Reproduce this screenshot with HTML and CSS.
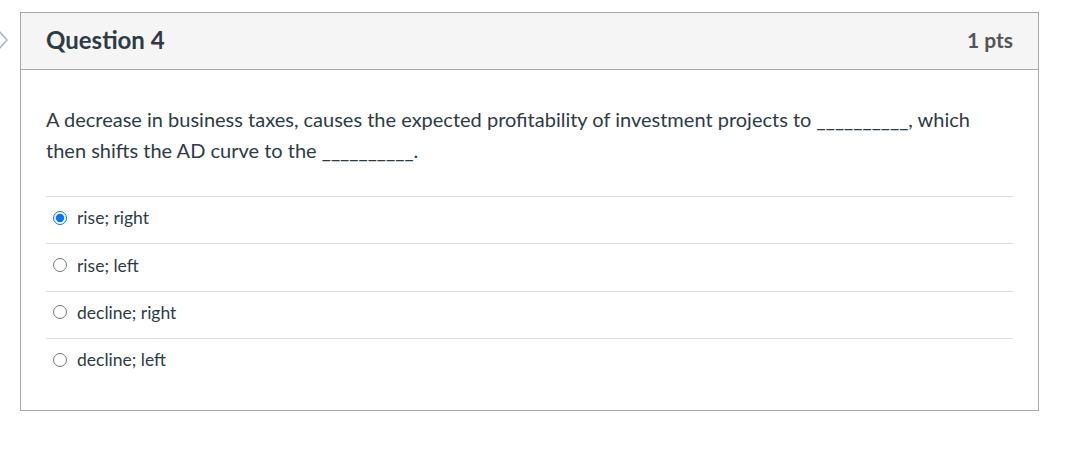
FILE: index.html
```html
<!DOCTYPE html>
<html>
<head>
<meta charset="utf-8">
<link rel="stylesheet" href="styles.css">
</head>
<body>
<div class="page">
  <svg class="chevron" width="12" height="24" viewBox="0 0 12 24"><path d="M-2 2 L7 12 L-2 22" fill="none" stroke="#a9b7c6" stroke-width="1.6"/></svg>
  <div class="card">
    <div class="header">
      <h3 class="title">Question 4</h3>
      <span class="pts">1 pts</span>
    </div>
    <div class="body">
      <p class="question">A decrease in business taxes, causes the expected profitability of investment projects to __________, which then shifts the AD curve to the __________.</p>
      <div class="answers">
        <label class="answer"><input type="radio" name="a" checked><span>rise; right</span></label>
        <label class="answer"><input type="radio" name="a"><span>rise; left</span></label>
        <label class="answer"><input type="radio" name="a"><span>decline; right</span></label>
        <label class="answer"><input type="radio" name="a"><span>decline; left</span></label>
      </div>
    </div>
  </div>
</div>
</body>
</html>
```

FILE: styles.css
```css
html, body {
  margin: 0;
  padding: 0;
  background: #fff;
}
body {
  font-family: Lato, "Liberation Sans", sans-serif;
  color: #2d3b45;
}
.page {
  position: relative;
  padding: 12px 0 0 20px;
}
.chevron {
  position: absolute;
  left: 0;
  top: 28px;
}
.card {
  width: 1019px;
  border: 1px solid #a8a8a8;
  box-sizing: border-box;
}
.header {
  height: 57px;
  background: #f5f5f5;
  border-bottom: 1px solid #a8a8a8;
  box-sizing: border-box;
  display: flex;
  align-items: center;
  justify-content: space-between;
  padding: 0 25px 3px 25px;
}
.title {
  margin: 0;
  font-size: 24px;
  font-weight: 700;
  color: #2d3b45;
  line-height: 1;
}
.pts {
  font-size: 21px;
  font-weight: 700;
  color: #555;
  line-height: 1;
}
.body {
  padding: 34px 25px 24px 25px;
}
.question {
  margin: 0;
  font-size: 20px;
  line-height: 31px;
}
.answers {
  margin-top: 30px;
}
.answer {
  display: flex;
  align-items: center;
  height: 47.4px;
  padding-bottom: 5px;
  border-top: 1px solid #dcdcdc;
  font-size: 17.5px;
  box-sizing: border-box;
}
.answer input {
  margin: 0 10px 0 7px;
  width: 14px;
  height: 14px;
  accent-color: #0075ff;
}
```
